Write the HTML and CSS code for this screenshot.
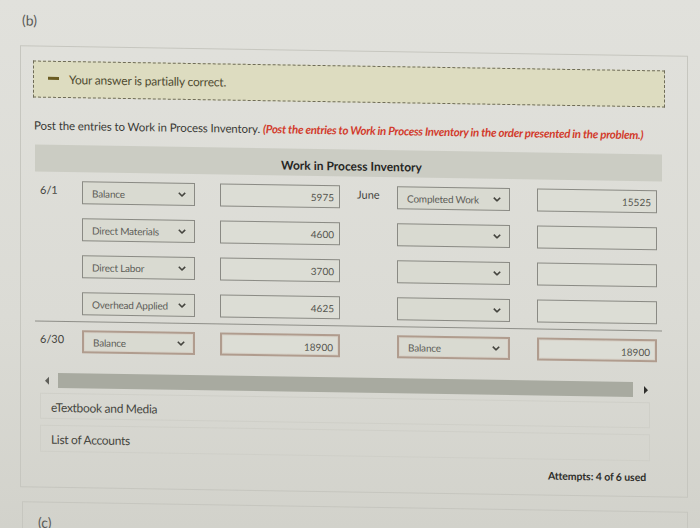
FILE: index.html
```html
<!DOCTYPE html>
<html lang="en">
<head>
<meta charset="utf-8">
<title>Work in Process Inventory</title>
<link rel="stylesheet" href="styles.css">
</head>
<body>
<div class="page">
  <div class="part-label">(b)</div>

  <section class="panel">
    <div class="content">
      <div class="feedback">
        <span class="feedback-icon"></span>
        <span class="feedback-text">Your answer is partially correct.</span>
      </div>

      <p class="instructions">Post the entries to Work in Process Inventory. <em class="note">(Post the entries to Work in Process Inventory in the order presented in the problem.)</em></p>

      <div class="t-account">
        <div class="t-head">Work in Process Inventory</div>

        <div class="t-rows">
          <div class="t-row">
            <span class="date">6/1</span>
            <div class="select"><span>Balance</span><svg class="chev" viewBox="0 0 10 6"><path d="M1 1l4 4 4-4"/></svg></div>
            <div class="amount">5975</div>
            <span class="date date-r">June</span>
            <div class="select"><span>Completed Work</span><svg class="chev" viewBox="0 0 10 6"><path d="M1 1l4 4 4-4"/></svg></div>
            <div class="amount">15525</div>
          </div>
          <div class="t-row">
            <span class="date"></span>
            <div class="select"><span>Direct Materials</span><svg class="chev" viewBox="0 0 10 6"><path d="M1 1l4 4 4-4"/></svg></div>
            <div class="amount">4600</div>
            <span class="date date-r"></span>
            <div class="select"><span></span><svg class="chev" viewBox="0 0 10 6"><path d="M1 1l4 4 4-4"/></svg></div>
            <div class="amount"></div>
          </div>
          <div class="t-row">
            <span class="date"></span>
            <div class="select"><span>Direct Labor</span><svg class="chev" viewBox="0 0 10 6"><path d="M1 1l4 4 4-4"/></svg></div>
            <div class="amount">3700</div>
            <span class="date date-r"></span>
            <div class="select"><span></span><svg class="chev" viewBox="0 0 10 6"><path d="M1 1l4 4 4-4"/></svg></div>
            <div class="amount"></div>
          </div>
          <div class="t-row">
            <span class="date"></span>
            <div class="select"><span>Overhead Applied</span><svg class="chev" viewBox="0 0 10 6"><path d="M1 1l4 4 4-4"/></svg></div>
            <div class="amount">4625</div>
            <span class="date date-r"></span>
            <div class="select"><span></span><svg class="chev" viewBox="0 0 10 6"><path d="M1 1l4 4 4-4"/></svg></div>
            <div class="amount"></div>
          </div>
        </div>

        <div class="t-total">
          <div class="t-row">
            <span class="date">6/30</span>
            <div class="select total"><span>Balance</span><svg class="chev" viewBox="0 0 10 6"><path d="M1 1l4 4 4-4"/></svg></div>
            <div class="amount total">18900</div>
            <span class="date date-r"></span>
            <div class="select total"><span>Balance</span><svg class="chev" viewBox="0 0 10 6"><path d="M1 1l4 4 4-4"/></svg></div>
            <div class="amount total">18900</div>
          </div>
        </div>
      </div>

      <div class="hscroll">
        <span class="arrow arrow-l"></span>
        <span class="track"></span>
        <span class="arrow arrow-r"></span>
      </div>

      <div class="link-box">eTextbook and Media</div>
      <div class="link-box link-box-2">List of Accounts</div>

      <div class="attempts">Attempts: 4 of 6 used</div>
    </div>
  </section>

  <section class="panel panel-next">
    <div class="part-label part-c">(c)</div>
  </section>
</div>
</body>
</html>
```

FILE: styles.css
```css
html, body {
  margin: 0;
  height: 100%;
}

body {
  font-family: Lato, "Open Sans", sans-serif;
  color: #3c3c38;
  background: linear-gradient(180deg, #e1e1dc 0%, #dbdbd5 60%, #d2d2cb 100%);
  overflow: hidden;
}

.page {
  padding-top: 11px;
  transform: skewY(0.9deg);
  transform-origin: 0 0;
}

.part-label {
  margin-left: 22px;
  font-size: 14px;
  line-height: 18px;
  color: #5b5b58;
}

.panel {
  box-sizing: border-box;
  height: 442px;
  margin: 16px 12px 0 20px;
  border: 1px solid #c6c6bf;
  padding: 14px 0 0 12px;
}

.content {
  width: 632px;
}

/* feedback banner */
.feedback {
  box-sizing: border-box;
  height: 37px;
  display: flex;
  align-items: center;
  gap: 10px;
  padding: 0 0 0 14px;
  border: 1px dashed #6f6c58;
  background: #dddcc0;
}

.feedback-icon {
  width: 11px;
  height: 3px;
  background: #6a5c22;
  margin-top: -3px;
}

.feedback-text {
  font-size: 12px;
  color: #4f4b30;
  letter-spacing: -0.2px;
}

.instructions {
  margin: 20px 0 0 1px;
  font-size: 11.5px;
  line-height: 15px;
  color: #3a3a36;
  white-space: nowrap;
  letter-spacing: -0.1px;
}

.note {
  color: #d23b2c;
  font-weight: 700;
  letter-spacing: -0.3px;
}

/* T-account */
.t-account {
  margin: 12px 0 0 2px;
  width: 627px;
}

.t-head {
  height: 27px;
  background: #cbccc3;
  font-size: 12px;
  font-weight: 700;
  color: #262624;
  text-align: center;
  line-height: 34px;
  text-indent: 6px;
}

.t-rows {
  display: flex;
  flex-direction: column;
  gap: 14px;
  padding: 9px 0 6px;
  border-bottom: 1px solid #8e8e88;
}

.t-total {
  padding-top: 8px;
}

.t-row {
  display: grid;
  grid-template-columns: 47px 113px 145px 57px 113px 147px;
  height: 23px;
  align-items: center;
}

.date {
  padding-left: 5px;
  font-size: 11px;
  color: #45453f;
  align-self: start;
  line-height: 18px;
}

.date-r {
  padding-left: 17px;
}

.select {
  box-sizing: border-box;
  height: 23px;
  display: flex;
  align-items: center;
  justify-content: space-between;
  padding: 0 8px 0 9px;
  border: 1px solid #8a8a84;
  background: #d9dad1;
  font-size: 10px;
  color: #5d5d58;
  letter-spacing: -0.2px;
}

.chev {
  width: 8px;
  height: 5px;
  fill: none;
  stroke: #45453f;
  stroke-width: 2;
}

.amount {
  box-sizing: border-box;
  height: 23px;
  width: 120px;
  padding: 0 5px;
  border: 1px solid #8a8a84;
  background: #dcddd5;
  font-size: 10px;
  color: #56564f;
  text-align: right;
  line-height: 23px;
}

/* debit amounts sit 25px after their select, credit amounts 27px */
.t-row > .amount:nth-child(3) {
  margin-left: 25px;
}

.t-row > .amount:last-child {
  margin-left: 27px;
}

.select.total,
.amount.total {
  border: 2px solid #b09c8e;
  box-shadow: inset 0 0 0 1px #d8d2c8;
}

/* horizontal scroller */
.hscroll {
  display: flex;
  align-items: center;
  height: 15px;
  margin: 20px 0 0 7px;
  width: 608px;
}

.arrow {
  width: 0;
  height: 0;
  border-top: 4px solid transparent;
  border-bottom: 4px solid transparent;
}

.arrow-l {
  border-right: 4px solid #5f5f5a;
  margin: 0 9px 0 5px;
}

.track {
  flex: 1;
  height: 15px;
  background: #a8aaa0;
}

.arrow-r {
  border-left: 4px solid #2f2f2c;
  margin-left: 11px;
}

/* resource links */
.link-box {
  box-sizing: border-box;
  height: 26px;
  width: 610px;
  margin: 5px 0 0 7px;
  padding-left: 10px;
  border: 1px solid #cfcfc8;
  font-size: 12px;
  line-height: 27px;
  color: #46463f;
  letter-spacing: -0.3px;
}

.link-box-2 {
  height: 27px;
  margin-top: 6px;
}

.attempts {
  margin-top: 9px;
  padding-right: 19px;
  text-align: right;
  font-size: 10.5px;
  font-weight: 700;
  line-height: 14px;
  color: #2e2e2a;
  letter-spacing: -0.1px;
}

.panel-next {
  height: 60px;
  margin-top: 14px;
  margin-left: 22px;
  padding: 11px 0 0 0;
}

.part-c {
  margin-left: 15px;
}
```
